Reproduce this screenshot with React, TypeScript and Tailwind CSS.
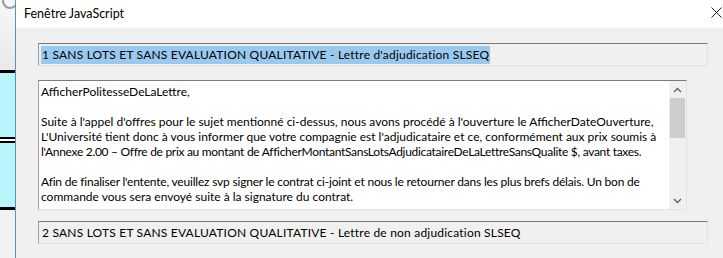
import React from "react";

const font = { fontFamily: 'Lato, "Liberation Sans", Arial, sans-serif' };

const LeftStrip: React.FC = () => (
  <div className="flex w-[15px] shrink-0 flex-col bg-[#f4f4f4]">
    <div className="relative h-[70px] overflow-hidden bg-gradient-to-b from-[#f7f7f7] to-[#e9e9e9]">
      <div className="absolute -top-[7px] left-[2px] h-[16px] w-[16px] rounded-full border-2 border-[#9a9a9a]" />
    </div>
    <div className="h-[3px] bg-black" />
    <div className="h-[64px] bg-[#b6f5fa]" />
    <div className="h-[2px] bg-black" />
    <div className="h-[2px] bg-white" />
    <div className="h-[2px] bg-black" />
    <div className="h-[64px] bg-[#b6f5fa]" />
    <div className="h-[3px] bg-black" />
    <div className="flex-1 bg-[#f2f2f2]" />
  </div>
);

const ReadOnlyField: React.FC<{ text: string; selected?: boolean }> = ({
  text,
  selected,
}) => (
  <div className="flex h-[23px] w-[670px] items-center border border-t-[#7a7a7a] border-l-[#a0a0a0] border-r-[#e3e3e3] border-b-[#e3e3e3] bg-[#f0f0f0] pl-[2px]">
    <span
      className={
        "whitespace-nowrap px-[1px] leading-[18px] tracking-[0.2px] text-black " +
        (selected ? "bg-[#99c9ef]" : "")
      }
    >
      {text}
    </span>
  </div>
);

// each line keeps its own tracking so the wraps land where the dialog has them
const lines: { text: string; cls: string }[] = [
  { text: "AfficherPolitesseDeLaLettre,", cls: "" },
  { text: "", cls: "" },
  {
    text: "Suite à l'appel d'offres pour le sujet mentionné ci-dessus, nous avons procédé à l'ouverture le AfficherDateOuverture,",
    cls: "",
  },
  {
    text: "L'Université tient donc à vous informer que votre compagnie est l'adjudicataire et ce, conformément aux prix soumis à",
    cls: "",
  },
  {
    text: "l'Annexe 2.00 – Offre de prix au montant de AfficherMontantSansLotsAdjudicataireDeLaLettreSansQualite $, avant taxes.",
    cls: "tracking-[-0.3px]",
  },
  { text: "", cls: "" },
  {
    text: "Afin de finaliser l'entente, veuillez svp signer le contrat ci-joint et nous le retourner dans les plus brefs délais. Un bon de",
    cls: "tracking-[-0.2px]",
  },
  { text: "commande vous sera envoyé suite à la signature du contrat.", cls: "" },
];

const Chevron: React.FC<{ up?: boolean }> = ({ up }) => (
  <svg width="9" height="6" viewBox="0 0 9 6" className="block">
    <path
      d={up ? "M1 5 L4.5 1.5 L8 5" : "M1 1 L4.5 4.5 L8 1"}
      fill="none"
      stroke="#606060"
      strokeWidth="1.4"
    />
  </svg>
);

const LetterBox: React.FC = () => (
  <div className="flex h-[130px] w-[649px] border border-t-[#7a7a7a] border-l-[#a0a0a0] border-r-[#e3e3e3] border-b-[#e3e3e3] bg-white">
    <div className="flex-1 overflow-hidden pl-[2px] pt-[3px]">
      {lines.map((l, i) => (
        <div
          key={i}
          className={"h-[15px] whitespace-nowrap leading-[15px] text-black " + l.cls}
        >
          {l.text || "\u00a0"}
        </div>
      ))}
    </div>
    <div className="flex w-[17px] flex-col bg-[#f0f0f0]">
      <div className="flex h-[17px] items-center justify-center">
        <Chevron up />
      </div>
      <div className="mx-[1px] h-[40px] bg-[#cdcdcd]" />
      <div className="flex-1" />
      <div className="flex h-[17px] items-center justify-center">
        <Chevron />
      </div>
    </div>
  </div>
);

export default function App() {
  return (
    <div className="flex h-[258px] w-[723px] overflow-hidden text-[12px]" style={font}>
      <LeftStrip />
      <div className="w-[1px] bg-[#5b8fc9]" />
      <div className="flex flex-1 flex-col">
        <div className="flex h-[28px] items-center justify-between bg-white pl-[8px] pr-[1px]">
          <span className="text-[12.5px] text-black">Fenêtre JavaScript</span>
          <svg width="11" height="11" viewBox="0 0 11 11" className="-mt-[4px]">
            <path d="M0.5 0.5 L10.5 10.5 M10.5 0.5 L0.5 10.5" stroke="#222" strokeWidth="1" />
          </svg>
        </div>
        <div className="flex flex-1 flex-col bg-[#f0f0f0] pl-[22px] pt-[15px]">
          <ReadOnlyField
            selected
            text="1 SANS LOTS ET SANS EVALUATION QUALITATIVE - Lettre d'adjudication SLSEQ"
          />
          <div className="mt-[14px]">
            <LetterBox />
          </div>
          <div className="mt-[11px]">
            <ReadOnlyField text="2 SANS LOTS ET SANS EVALUATION QUALITATIVE - Lettre de non adjudication SLSEQ" />
          </div>
        </div>
      </div>
    </div>
  );
}
